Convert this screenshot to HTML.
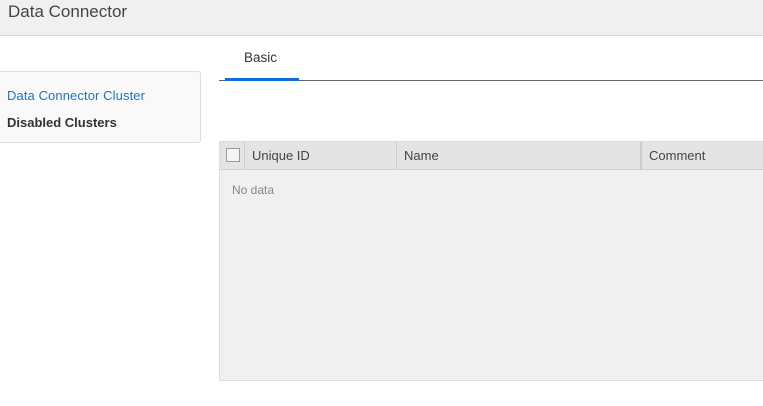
<!DOCTYPE html>
<html><head><style>
*{margin:0;padding:0;box-sizing:border-box}
body{width:763px;height:406px;background:#fff;font-family:"Liberation Sans",sans-serif;position:relative;overflow:hidden}
.hdr{position:absolute;left:0;top:0;width:763px;height:36px;background:#f0f0f0;border-bottom:1px solid #d8d8d8}
.hdr span{position:absolute;left:8px;top:2px;font-size:17px;color:#444}
.side{position:absolute;left:-5px;top:71px;width:206px;height:72px;background:#f9f9f9;border:1px solid #ddd;border-radius:3px}
.l1{position:absolute;left:7px;top:88px;font-size:13px;color:#1a73d0;letter-spacing:0.1px}
.l2{position:absolute;left:7px;top:115px;font-size:13px;color:#333;font-weight:bold}
.tab{position:absolute;left:244px;top:50px;font-size:13.5px;color:#333}
.tline{position:absolute;left:219px;top:80px;width:544px;height:1px;background:#666}
.tact{position:absolute;left:225px;top:78px;width:74px;height:3px;background:#0a6fd8}
.tbl{position:absolute;left:219px;top:141px;width:550px;height:240px;background:#f0f0f0;border:1px solid #ddd}
.th{position:absolute;left:0;top:0;width:100%;height:28px;background:#e4e4e4;border-bottom:1px solid #d0d0d0}
.c{position:absolute;top:0;height:27px;border-left:1px solid #ccc;font-size:13px;color:#444;padding:6px 0 0 7px}
.cb{position:absolute;left:6px;top:6px;width:14px;height:14px;border:1px solid #999;background:#f4f4f4}
.nd{position:absolute;left:12px;top:41px;font-size:12px;color:#888}
</style></head><body>
<div class="hdr"><span>Data Connector</span></div>
<div class="side"></div>
<div class="l1">Data Connector Cluster</div>
<div class="l2">Disabled Clusters</div>
<div class="tab">Basic</div>
<div class="tline"></div><div class="tact"></div>
<div class="tbl">
<div class="th">
<div class="cb"></div>
<div class="c" style="left:24px">Unique ID</div>
<div class="c" style="left:176px">Name</div>
<div class="c" style="left:420px;border-left:2px solid #ccc">Comment</div>
</div>
<div class="nd">No data</div>
</div>
</body></html>
